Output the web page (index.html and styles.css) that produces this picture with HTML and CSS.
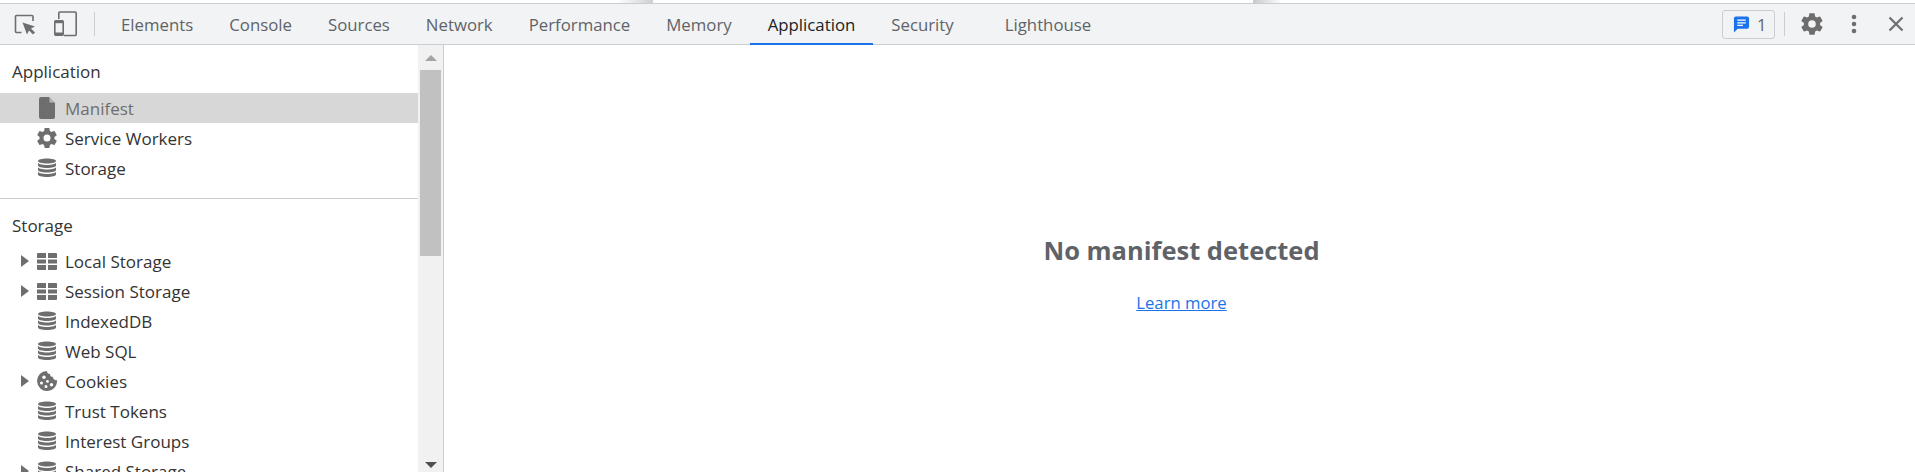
FILE: index.html
```html
<!DOCTYPE html>
<html lang="en">
<head>
<meta charset="utf-8">
<title>DevTools Application</title>
<link rel="stylesheet" href="styles.css">
</head>
<body>
<svg class="defs" width="0" height="0" aria-hidden="true">
  <symbol id="db" viewBox="0 0 20 20"><path d="M10 .5c5 0 9 1.100 9 2.500s-4 2.500-9 2.500-9-1.100-9-2.500 4-2.500 9-2.500zM1 4.500c0 1.400 4 2.500 9 2.500s9-1.100 9-2.500v3c0 1.400-4 2.500-9 2.500s-9-1.100-9-2.500zM1 9c0 1.400 4 2.500 9 2.500s9-1.100 9-2.500v3c0 1.400-4 2.500-9 2.500s-9-1.100-9-2.500zM1 13.500c0 1.400 4 2.500 9 2.500s9-1.100 9-2.500v3c0 1.400-4 2.500-9 2.500s-9-1.100-9-2.500z" fill="#6e6e6e"/></symbol>
  <symbol id="table" viewBox="0 0 20 17"><path d="M0 1a1 1 0 0 1 1-1h8v5H0zM11 0h8a1 1 0 0 1 1 1v4h-9zM0 6.500h9v4H0zM11 6.500h9v4h-9zM0 12h9v5H1a1 1 0 0 1-1-1zM11 12h9v4a1 1 0 0 1-1 1h-8z" fill="#6e6e6e"/></symbol>
  <symbol id="gear" viewBox="0 0 24 24"><path fill-rule="evenodd" d="M19.400 13c.05-.33.1-.66.1-1s-.05-.67-.1-1l2.100-1.600c.2-.15.250-.42.120-.64l-2-3.460c-.12-.22-.39-.3-.61-.22l-2.490 1c-.52-.4-1.080-.73-1.690-.98l-.38-2.650A.488.488 0 0 0 14 2h-4c-.25 0-.46.180-.49.420l-.38 2.650c-.61.250-1.170.590-1.690.980l-2.490-1c-.23-.09-.49 0-.61.220l-2 3.460c-.13.220-.07.490.120.640L4.570 11c-.04.330-.07.660-.07 1s.03.670.07 1l-2.110 1.600c-.19.150-.25.420-.12.640l2 3.460c.12.220.39.300.61.220l2.490-1c.52.400 1.080.730 1.690.980l.38 2.650c.03.240.24.420.49.420h4c.25 0 .46-.18.49-.42l.38-2.650c.61-.25 1.170-.59 1.690-.98l2.490 1c.23.090.49 0 .61-.22l2-3.460c.12-.22.07-.49-.12-.64zM12 15.500a3.500 3.500 0 1 1 0-7 3.500 3.500 0 0 1 0 7z" fill="#6e6e6e"/></symbol>
</svg>

<div class="topstrip"></div>

<header class="toolbar">
  <button class="tool-icon inspect" aria-label="Inspect">
    <svg width="24" height="24" viewBox="0 0 24 24"><path d="M9.500 20.500H4.500a1 1 0 0 1-1-1V4.500a1 1 0 0 1 1-1H20a1 1 0 0 1 1 1V9" fill="none" stroke="#6e6e6e" stroke-width="1.600"/><path d="M10.500 10.500L23 14.500 19 16.500 23 20.500 21 22.500 17 18.500 15 22.500z" fill="#6e6e6e"/></svg>
  </button>
  <button class="tool-icon device" aria-label="Device">
    <svg width="26" height="26" viewBox="0 0 26 26"><path d="M5.800 8V2a1 1 0 0 1 1-1h15.400a1 1 0 0 1 1 1v21.500a1 1 0 0 1-1 1H11" fill="none" stroke="#6e6e6e" stroke-width="1.600"/><rect x="1.800" y="9.800" width="8.400" height="14.400" rx="1" fill="none" stroke="#6e6e6e" stroke-width="1.600"/><rect x="1.800" y="9.800" width="8.400" height="2.400" fill="#6e6e6e"/><rect x="1.800" y="21.500" width="8.400" height="3" fill="#6e6e6e"/></svg>
  </button>
  <span class="divider"></span>
  <nav class="tabs">
    <span class="tab">Elements</span>
    <span class="tab">Console</span>
    <span class="tab">Sources</span>
    <span class="tab">Network</span>
    <span class="tab">Performance</span>
    <span class="tab">Memory</span>
    <span class="tab active">Application</span>
    <span class="tab">Security</span>
    <span class="tab last">Lighthouse</span>
  </nav>
  <div class="right-tools">
    <span class="issues">
      <svg width="17" height="18" viewBox="0 0 18 18"><path d="M3 1h12a2 2 0 0 1 2 2v9a2 2 0 0 1-2 2H5l-4 4V3a2 2 0 0 1 2-2z" fill="#1a73e8"/><path d="M4.500 5h9M4.500 7.800h9M4.500 10.500h6" stroke="#fff" stroke-width="1.300"/></svg>
      <span>1</span>
    </span>
    <span class="divider small"></span>
    <svg class="settings" width="26" height="26"><use href="#gear"/></svg>
    <svg class="more" width="6" height="20" viewBox="0 0 6 20"><circle cx="3" cy="3" r="2.300" fill="#6e6e6e"/><circle cx="3" cy="10" r="2.300" fill="#6e6e6e"/><circle cx="3" cy="17" r="2.300" fill="#6e6e6e"/></svg>
    <svg class="close" width="16" height="16" viewBox="0 0 16 16"><path d="M1.500 1.500l13 13M14.500 1.500l-13 13" stroke="#6e6e6e" stroke-width="2.200"/></svg>
  </div>
</header>

<main class="panes">
  <aside class="sidebar">
    <div class="tree">
      <section class="group first">
        <h2 class="group-title">Application</h2>
        <div class="row selected"><span class="arrow-slot"></span><span class="icon"><svg width="16" height="22" viewBox="0 0 16 22"><path d="M2 0h8l6 6v14a2 2 0 0 1-2 2H2a2 2 0 0 1-2-2V2a2 2 0 0 1 2-2z" fill="#6e6e6e"/><path d="M10.500 0l5.500 5.500h-5.500z" fill="#b5b5b5"/></svg></span><span class="label dim">Manifest</span></div>
        <div class="row"><span class="arrow-slot"></span><span class="icon"><svg width="24" height="24"><use href="#gear"/></svg></span><span class="label">Service Workers</span></div>
        <div class="row"><span class="arrow-slot"></span><span class="icon"><svg width="20" height="20"><use href="#db"/></svg></span><span class="label">Storage</span></div>
      </section>
      <section class="group">
        <h2 class="group-title">Storage</h2>
        <div class="row"><span class="arrow-slot"><i class="arrow"></i></span><span class="icon"><svg width="20" height="17"><use href="#table"/></svg></span><span class="label">Local Storage</span></div>
        <div class="row"><span class="arrow-slot"><i class="arrow"></i></span><span class="icon"><svg width="20" height="17"><use href="#table"/></svg></span><span class="label">Session Storage</span></div>
        <div class="row"><span class="arrow-slot"></span><span class="icon"><svg width="20" height="20"><use href="#db"/></svg></span><span class="label">IndexedDB</span></div>
        <div class="row"><span class="arrow-slot"></span><span class="icon"><svg width="20" height="20"><use href="#db"/></svg></span><span class="label">Web SQL</span></div>
        <div class="row"><span class="arrow-slot"><i class="arrow"></i></span><span class="icon"><svg width="20" height="20" viewBox="0 0 20 20"><path fill-rule="evenodd" d="M10 0a3 3 0 0 0 3 3 3 3 0 0 0 3 3 3 3 0 0 0 4 3 10 10 0 1 1-10-9zM7 4.500a1.800 1.800 0 1 0 0 3.600 1.800 1.800 0 0 0 0-3.600zM4.500 10.500a1.500 1.500 0 1 0 0 3 1.500 1.500 0 0 0 0-3zM10.500 9a1.400 1.400 0 1 0 0 2.800 1.400 1.400 0 0 0 0-2.800zM9 14a1.500 1.500 0 1 0 0 3 1.500 1.500 0 0 0 0-3zM14.500 12a1.700 1.700 0 1 0 0 3.400 1.700 1.700 0 0 0 0-3.400z" fill="#6e6e6e"/></svg></span><span class="label">Cookies</span></div>
        <div class="row"><span class="arrow-slot"></span><span class="icon"><svg width="20" height="20"><use href="#db"/></svg></span><span class="label">Trust Tokens</span></div>
        <div class="row"><span class="arrow-slot"></span><span class="icon"><svg width="20" height="20"><use href="#db"/></svg></span><span class="label">Interest Groups</span></div>
        <div class="row"><span class="arrow-slot"><i class="arrow"></i></span><span class="icon"><svg width="20" height="20"><use href="#db"/></svg></span><span class="label">Shared Storage</span></div>
      </section>
    </div>
    <div class="scrollbar">
      <span class="scroll-btn up"></span>
      <span class="thumb"></span>
      <span class="scroll-btn down"></span>
    </div>
  </aside>
  <section class="content">
    <h1 class="empty-title">No manifest detected</h1>
    <a class="learn" href="#">Learn more</a>
  </section>
</main>
</body>
</html>
```

FILE: styles.css
```css
* { box-sizing: border-box; }
html, body { margin: 0; height: 100%; }
body {
  width: 1915px;
  height: 472px;
  overflow: hidden;
  background: #fff;
  font-family: "Open Sans", "Noto Sans", sans-serif;
  display: flex;
  flex-direction: column;
  color: #333;
}
.defs { position: absolute; }
.topstrip {
  height: 3px;
  flex: none;
  background:
    linear-gradient(90deg, #fff 617px, #cfcfcf 653px, #fff 653px, #fff 1253px, #c8c8c8 1253px, #fff 1282px);
}
.toolbar {
  height: 42px;
  flex: none;
  display: flex;
  align-items: center;
  background: #f1f3f4;
  border-top: 1px solid #cbcdd1;
  border-bottom: 1px solid #cbcdd1;
}
.tool-icon {
  border: 0;
  background: none;
  padding: 0;
  display: flex;
  align-items: center;
  justify-content: center;
}
.inspect { margin-left: 12px; width: 24px; }
.device { margin-left: 17px; width: 26px; }
.divider {
  width: 1px;
  height: 24px;
  background: #cbcdd1;
  margin-left: 15px;
}
.tabs { display: flex; height: 100%; margin-left: 8px; }
.tab {
  display: flex;
  align-items: center;
  padding: 0 18px;
  font-size: 16.8px;
  color: #5f6368;
  position: relative;
  white-space: nowrap;
}
.tab.active { color: #202124; }
.tab.active::after {
  content: "";
  position: absolute;
  left: 0;
  right: 0;
  bottom: -1px;
  height: 2px;
  background: #1a73e8;
}
.tab.last { margin-left: 15px; }
.right-tools {
  margin-left: auto;
  display: flex;
  align-items: center;
  height: 100%;
}
.issues {
  display: flex;
  align-items: center;
  gap: 7px;
  width: 53px;
  height: 29px;
  padding-left: 10px;
  border: 1px solid #cbcdd1;
  border-radius: 3px;
  font-size: 16.5px;
  color: #5f6368;
}
.divider.small { margin-left: 9px; }
.settings { margin-left: 14px; }
.more { margin-left: 26px; }
.close { margin-left: 31px; margin-right: 11px; }

.panes { flex: 1; display: flex; min-height: 0; }
.sidebar {
  width: 444px;
  flex: none;
  display: flex;
  border-right: 1px solid #cbcdd1;
  overflow: hidden;
}
.tree { width: 418px; flex: none; overflow: hidden; }
.group { border-top: 1px solid #cbcdd1; }
.group.first { border-top: 0; padding-bottom: 15px; }
.group-title {
  margin: 0;
  height: 48px;
  padding: 15px 0 0 12px;
  font-size: 17px;
  font-weight: 400;
  line-height: 24px;
  color: #333;
}
.group:not(.first) .group-title { height: 47px; padding-top: 15px; }
.row {
  height: 30px;
  display: flex;
  align-items: center;
}
.row.selected { background: #d7d7d7; }
.arrow-slot {
  width: 34px;
  flex: none;
  padding-left: 21px;
  display: flex;
}
.arrow {
  width: 0;
  height: 0;
  border-left: 8px solid #6e6e6e;
  border-top: 6px solid transparent;
  border-bottom: 6px solid transparent;
}
.icon {
  width: 26px;
  flex: none;
  display: flex;
  align-items: center;
  justify-content: center;
}
.label {
  margin-left: 5px;
  font-size: 17px;
  color: #333;
  white-space: nowrap;
}
.label.dim { color: #6e6e6e; }
.scrollbar {
  width: 25px;
  flex: none;
  background: #f1f1f1;
  display: flex;
  flex-direction: column;
  align-items: center;
}
.scroll-btn { width: 0; height: 0; border-left: 6px solid transparent; border-right: 6px solid transparent; }
.scroll-btn.up { border-bottom: 6px solid #a3a3a3; margin-top: 10px; }
.thumb { width: 21px; height: 186px; background: #c1c1c1; margin-top: 9px; }
.scroll-btn.down { border-top: 6px solid #505050; margin-top: auto; margin-bottom: 4px; }
.content {
  flex: 1;
  display: flex;
  flex-direction: column;
  align-items: center;
  padding: 187px 0 0 4px;
}
.empty-title {
  margin: 0;
  font-size: 25.5px;
  line-height: 36px;
  font-weight: 700;
  color: #5f6368;
}
.learn {
  margin-top: 23px;
  font-size: 16.7px;
  line-height: 24px;
  color: #1a73e8;
}
```
